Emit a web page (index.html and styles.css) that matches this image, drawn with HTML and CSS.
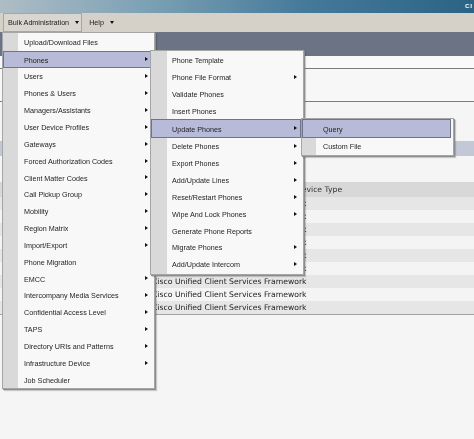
FILE: index.html
```html
<!DOCTYPE html>
<html lang="en">
  <head>
    <meta charset="UTF-8" />
    <meta name="viewport" content="width=device-width, initial-scale=1.0" />
    <title>Bulk Administration - Update Phones</title>
    <link rel="stylesheet" href="styles.css">
  </head>
  <body>
    <div class="titlebar"><span class="brand">CI</span></div>

    <div class="menubar">
      <div class="menubar-item open">Bulk Administration <span class="caret"></span></div>
      <div class="menubar-item">Help <span class="caret"></span></div>
    </div>

    <div class="content">
      <div class="toolbar"></div>
      <div class="filter-top"></div>
      <div class="filter-body"></div>
      <div class="section-head"></div>

      <table class="results">
        <thead>
          <tr>
            <th></th>
            <th>Device Type</th>
          </tr>
        </thead>
        <tbody>
          <tr><td></td><td>Cisco Unified Client Services Framework</td></tr>
          <tr><td></td><td>Cisco Unified Client Services Framework</td></tr>
          <tr><td></td><td>Cisco Unified Client Services Framework</td></tr>
          <tr><td></td><td>Cisco Unified Client Services Framework</td></tr>
          <tr><td></td><td>Cisco Unified Client Services Framework</td></tr>
          <tr><td></td><td>Cisco Unified Client Services Framework</td></tr>
          <tr><td></td><td>Cisco Unified Client Services Framework</td></tr>
          <tr><td></td><td>Cisco Unified Client Services Framework</td></tr>
          <tr><td></td><td>Cisco Unified Client Services Framework</td></tr>
        </tbody>
      </table>
    </div>

    <!-- Bulk Administration dropdown -->
    <ul class="menu menu-main">
      <li>Upload/Download Files</li>
      <li class="sub active">Phones</li>
      <li class="sub">Users</li>
      <li class="sub">Phones &amp; Users</li>
      <li class="sub">Managers/Assistants</li>
      <li class="sub">User Device Profiles</li>
      <li class="sub">Gateways</li>
      <li class="sub">Forced Authorization Codes</li>
      <li class="sub">Client Matter Codes</li>
      <li class="sub">Call Pickup Group</li>
      <li class="sub">Mobility</li>
      <li class="sub">Region Matrix</li>
      <li class="sub">Import/Export</li>
      <li>Phone Migration</li>
      <li class="sub">EMCC</li>
      <li class="sub">Intercompany Media Services</li>
      <li class="sub">Confidential Access Level</li>
      <li class="sub">TAPS</li>
      <li class="sub">Directory URIs and Patterns</li>
      <li class="sub">Infrastructure Device</li>
      <li>Job Scheduler</li>
    </ul>

    <!-- Phones submenu -->
    <ul class="menu menu-phones">
      <li>Phone Template</li>
      <li class="sub">Phone File Format</li>
      <li>Validate Phones</li>
      <li>Insert Phones</li>
      <li class="sub active">Update Phones</li>
      <li class="sub">Delete Phones</li>
      <li class="sub">Export Phones</li>
      <li class="sub">Add/Update Lines</li>
      <li class="sub">Reset/Restart Phones</li>
      <li class="sub">Wipe And Lock Phones</li>
      <li>Generate Phone Reports</li>
      <li class="sub">Migrate Phones</li>
      <li class="sub">Add/Update Intercom</li>
    </ul>

    <!-- Update Phones submenu -->
    <ul class="menu menu-update">
      <li class="active">Query</li>
      <li>Custom File</li>
    </ul>
  </body>
</html>
```

FILE: styles.css
```css
body {
  margin: 0;
  width: 474px;
  height: 439px;
  overflow: hidden;
  position: relative;
  background-color: #f5f5f5;
  font-family: "Liberation Sans", Arial, sans-serif;
}

/* Title bar */
.titlebar {
  height: 13px;
  padding-left: 465px;
  overflow: hidden;
  white-space: nowrap;
  background: linear-gradient(to right, #aebdc5 0%, #7ea2b5 30%, #44799a 65%, #2c6384 100%);
}

.brand {
  display: block;
  color: #fff;
  font-size: 6px;
  font-weight: bold;
  letter-spacing: 1px;
  line-height: 12px;
}

/* Menu bar */
.menubar {
  height: 19px;
  padding-left: 3px;
  display: flex;
  background-color: #d5d1c9;
  will-change: transform; /* grey text antialiasing */
}

.menubar-item {
  display: flex;
  align-items: center;
  gap: 6px;
  padding: 0 2px 0 4px;
  font-size: 7.2px;
  color: #1b1b1b;
  border: 1px solid transparent;
}

.menubar-item + .menubar-item {
  padding-left: 6px;
}

.menubar-item.open {
  background-color: #d9d6cf;
  border-color: #aaa69e;
}

.caret {
  width: 0;
  height: 0;
  border-left: 2.5px solid transparent;
  border-right: 2.5px solid transparent;
  border-top: 3px solid #111;
}

/* Page behind the menus */
.toolbar {
  height: 24px;
  background-color: #6b7385;
}

.filter-top {
  height: 12px;
  background-color: #f9f9f9;
  border-bottom: 1px solid #7c7c7c;
}

.filter-body {
  height: 32px;
  background-color: #f7f7f7;
  border-bottom: 1px solid #7c7c7c;
}

.section-head {
  margin-top: 39px;
  height: 15px;
  background-color: #c3c8d6;
}

.results {
  margin-top: 26px;
  width: 488px;
  table-layout: fixed;
  border-collapse: collapse;
  font-family: "DejaVu Sans", Verdana, sans-serif;
  font-size: 7.7px;
  color: #222;
  border-bottom: 1px solid #a3a3a3;
  will-change: transform;
}

.results th:first-child,
.results td:first-child {
  width: 150px;
}

.results th {
  height: 15px;
  padding: 0;
  font-weight: normal;
  text-align: center;
  color: #333;
  background-color: #d8d8d8;
}

.results td {
  height: 13px;
  padding: 0 0 0 2px;
  white-space: nowrap;
}

.results tbody tr:nth-child(odd) td {
  background-color: #e6e6e6;
}

.results tbody tr:nth-child(even) td {
  background-color: #f4f4f4;
}

/* Dropdown menus */
.menu {
  position: absolute;
  margin: 0;
  padding: 0;
  list-style: none;
  box-sizing: border-box;
  background: linear-gradient(to right, #d9d9d9 15px, #f8f8f8 15px);
  border: 1px solid #a5a5a5;
  box-shadow: 1px 1px 0 #8d8d8d, 2px 2px 1px rgba(0, 0, 0, 0.18);
  font-size: 7.2px;
  color: #1d1d1d;
  will-change: transform;
}

.menu li {
  position: relative;
  height: 16.85px;
  line-height: 16.85px;
  padding: 1px 0 0 21px;
  box-sizing: border-box;
  white-space: nowrap;
}

.menu li.active {
  height: 19px;
  line-height: 17px;
  margin-right: 2px;
  padding-left: 20px;
  background-color: #b7bbd7;
  border: 1px solid #6d7491;
}

.menu li.sub::after {
  content: "";
  position: absolute;
  right: 6px;
  top: 50%;
  margin-top: -2.5px;
  border-left: 3px solid #111;
  border-top: 2.5px solid transparent;
  border-bottom: 2.5px solid transparent;
}

.menu li.sub.active::after {
  right: 3px;
}

.menu-main {
  left: 2px;
  top: 32px;
  width: 153px;
  padding-top: 1px;
}

.menu-main li.active {
  height: 17.6px;
  line-height: 15.6px;
}

.menu-phones {
  left: 150px;
  top: 50px;
  width: 154px;
  padding: 1px 0;
  background: linear-gradient(to right, #d9d9d9 16px, #f8f8f8 16px);
}

.menu-update {
  left: 301px;
  top: 118px;
  width: 153px;
  background: linear-gradient(to right, #d9d9d9 14px, #f8f8f8 14px);
}
```
